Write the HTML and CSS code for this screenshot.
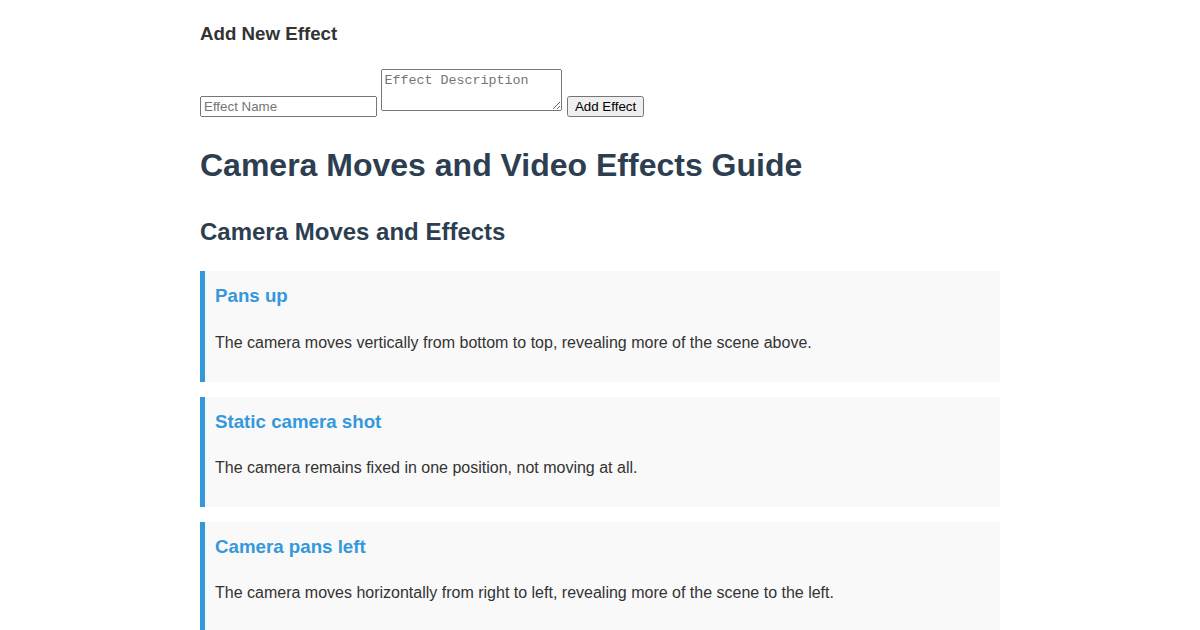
FILE: index.html
```html
<!DOCTYPE html>
<html>
<head>
  <meta charset="UTF-8">
  <meta name="viewport" content="width=device-width, initial-scale=1.0">
  <title>Camera Moves and Video Effects Guide</title>
  <link rel="stylesheet" href="styles.css">
</head>
<body>
  <!-- Add effect form -->
  <div class="add-effect">
    <h3>Add New Effect</h3>
    <div class="add-form">
      <input type="text" id="effectName" placeholder="Effect Name">
      <textarea id="effectDesc" placeholder="Effect Description"></textarea>
      <button onclick="addEffect()">Add Effect</button>
    </div>
  </div>

  <h1>Camera Moves and Video Effects Guide</h1>

  <div class="section" id="effects">
    <h2>Camera Moves and Effects</h2>

    <div class="effect">
      <h3>Pans up</h3>
      <p>The camera moves vertically from bottom to top, revealing more of the scene above.</p>
    </div>

    <div class="effect">
      <h3>Static camera shot</h3>
      <p>The camera remains fixed in one position, not moving at all.</p>
    </div>

    <div class="effect">
      <h3>Camera pans left</h3>
      <p>The camera moves horizontally from right to left, revealing more of the scene to the left.</p>
    </div>
  </div>

  <script>
    function addEffect() {
      const name = document.getElementById('effectName').value.trim();
      const desc = document.getElementById('effectDesc').value.trim();
      if (!name || !desc) return;

      const div = document.createElement('div');
      div.className = 'effect';
      const h3 = document.createElement('h3');
      h3.textContent = name;
      const p = document.createElement('p');
      p.textContent = desc;
      div.appendChild(h3);
      div.appendChild(p);
      document.getElementById('effects').appendChild(div);

      document.getElementById('effectName').value = '';
      document.getElementById('effectDesc').value = '';
    }
  </script>
</body>
</html>
```

FILE: styles.css
```css
body {
  font-family: Arial, "Liberation Sans", sans-serif;
  line-height: 1.6;
  color: #333;
  max-width: 800px;
  margin: 0 auto;
  padding: 0;
}
h1, h2 {
  color: #2c3e50;
}
.add-form {
  padding-top: 2px;
}
input, button {
  font-family: "Liberation Sans", Arial, sans-serif;
  font-size: 13.33px;
}
input {
  width: 177px;
  box-sizing: border-box;
}
textarea {
  font-family: "Liberation Mono", monospace;
  font-size: 13.33px;
  line-height: 18px;
}
.effect {
  background-color: #f9f9f9;
  border-left: 5px solid #3498db;
  padding: 10px;
  margin-bottom: 15px;
}
.effect h3 {
  color: #3498db;
  margin-top: 0;
}
```
